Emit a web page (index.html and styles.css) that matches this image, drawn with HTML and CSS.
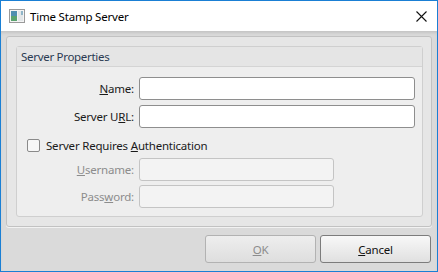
FILE: index.html
```html
<!DOCTYPE html>
<html>
<head>
<meta charset="utf-8">
<link rel="stylesheet" href="styles.css">
</head>
<body>
<div class="window">
  <div class="titlebar">
    <svg class="app-icon" width="16" height="14" viewBox="0 0 16 14">
      <rect x="0.5" y="0.5" width="15" height="13" fill="#f4f4f4" stroke="#9a9a9a"/>
      <rect x="2" y="2" width="6" height="10" fill="#4f8fb0"/>
      <rect x="2" y="7" width="6" height="5" fill="#5aa36f"/>
      <rect x="9" y="2" width="5" height="10" fill="#e2e6e8"/>
      <rect x="12" y="2" width="2" height="4" fill="#8fb5c8"/>
    </svg>
    <span class="title">Time Stamp Server</span>
    <svg class="close" width="11" height="11" viewBox="0 0 11 11">
      <path d="M0.5 0.5 L10.5 10.5 M10.5 0.5 L0.5 10.5" stroke="#111" stroke-width="1.1" fill="none"/>
    </svg>
  </div>
  <div class="client">
    <div class="panel">
      <div class="group">
        <div class="group-header">Server Properties</div>
        <div class="group-body">
          <div class="form">
            <label class="lbl"><u>N</u>ame:</label>
            <div class="field"></div>
            <label class="lbl">Server U<u>R</u>L:</label>
            <div class="field"></div>
          </div>
          <div class="check-row">
            <span class="checkbox"></span>
            <span class="check-label">Server Requires <u>A</u>uthentication</span>
          </div>
          <div class="form form-disabled">
            <label class="lbl dis"><u>U</u>sername:</label>
            <div class="field field-dis"></div>
            <label class="lbl dis">Pass<u>w</u>ord:</label>
            <div class="field field-dis"></div>
          </div>
        </div>
      </div>
    </div>
    <div class="buttons">
      <div class="btn btn-dis"><u>O</u>K</div>
      <div class="btn"><u>C</u>ancel</div>
    </div>
  </div>
</div>
</body>
</html>
```

FILE: styles.css
```css
html, body {
  margin: 0;
  padding: 0;
}
body {
  font-family: "Noto Sans", "Open Sans", sans-serif;
  font-size: 11.5px;
  letter-spacing: -0.2px;
  color: #1a1a1a;
}
.window {
  width: 438px;
  height: 272px;
  box-sizing: border-box;
  border: 1px solid #1a7fd4;
  display: flex;
  flex-direction: column;
  background: #dadada;
}
.titlebar {
  height: 30px;
  background: #ffffff;
  display: flex;
  align-items: center;
  flex-shrink: 0;
}
.app-icon {
  margin-left: 8px;
}
.title {
  margin-left: 5px;
  font-size: 11.5px;
  color: #000;
  flex: 1;
}
.close {
  margin-right: 10px;
}
.client {
  flex: 1;
  display: flex;
  flex-direction: column;
  padding: 5px 5px 0 5px;
  background: #dadada;
  box-shadow: inset 0 3px 3px -1px #c4c4c4;
}
.panel {
  height: 191px;
  box-sizing: border-box;
  border: 1px solid #c2c2c2;
  border-radius: 3px;
  background: #e6e6e6;
  padding: 9px 8px 9px 9px;
  box-shadow: 0 1px 0 #f2f2f2;
}
.group {
  height: 100%;
  box-sizing: border-box;
  border: 1px solid #cfcfcf;
  border-radius: 3px;
  background: #eeeeee;
  display: flex;
  flex-direction: column;
}
.group-header {
  height: 19px;
  line-height: 19px;
  padding-left: 4px;
  background: #e5e5e5;
  border-bottom: 1px solid #d4d4d4;
  color: #2a3a52;
  letter-spacing: -0.3px;
}
.group-body {
  padding-top: 10px;
}
.form {
  display: grid;
  grid-template-columns: 117px 1fr;
  column-gap: 5px;
  row-gap: 5px;
  padding-right: 7px;
  align-items: center;
}
.form-disabled {
  grid-template-columns: 117px 195px;
  row-gap: 4px;
}
.lbl {
  text-align: right;
}
.lbl.dis {
  color: #8c8c8c;
}
.field {
  height: 23px;
  box-sizing: border-box;
  border: 1px solid #8e8e8e;
  border-radius: 3px;
  background: #ffffff;
}
.field-dis {
  border-color: #c4c4c4;
  background: #f3f3f3;
}
.check-row {
  display: flex;
  align-items: center;
  height: 20px;
  margin-top: 7px;
  margin-bottom: 3px;
  padding-left: 10px;
}
.checkbox {
  width: 13px;
  height: 13px;
  box-sizing: border-box;
  border: 1px solid #8a8a8a;
  border-radius: 2px;
  background: #f7f7f7;
  margin-right: 6px;
}
.buttons {
  display: flex;
  justify-content: flex-end;
  gap: 4px;
  margin-top: 8px;
  padding-right: 1px;
}
.btn {
  width: 111px;
  height: 28px;
  box-sizing: border-box;
  border: 1px solid #7c7c7c;
  border-radius: 3px;
  background: linear-gradient(#f8f8f8, #ececec 50%, #e0e0e0);
  display: flex;
  align-items: center;
  justify-content: center;
  color: #111;
}
.btn-dis {
  border-color: #b2b2b2;
  color: #8c8c8c;
  background: linear-gradient(#eeeeee, #e6e6e6 50%, #dedede);
}
```
